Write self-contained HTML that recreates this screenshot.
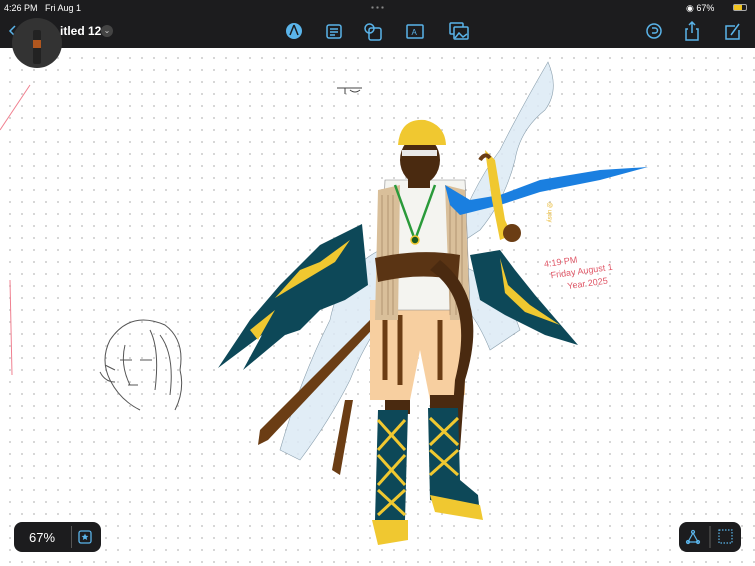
<!DOCTYPE html>
<html><head><meta charset="utf-8"><style>
*{margin:0;padding:0;box-sizing:border-box}
body{width:755px;height:566px;overflow:hidden;position:relative;font-family:"Liberation Sans",sans-serif;background:#fff}
#canvas{position:absolute;left:0;top:48px;width:755px;height:518px;background-color:#fff;background-image:radial-gradient(circle,#cfcfcf 0.8px,transparent 1.2px);background-size:12px 12px;background-position:4px 4px}
#top{position:absolute;left:0;top:0;width:755px;height:48px;background:#1c1c1e;color:#fff}
.st{position:absolute;top:3px;font-size:9px;color:#fff}
.title{position:absolute;left:60px;top:24px;font-size:12px;font-weight:bold;color:#fff}
.pill{position:absolute;background:#1c1c1e;border-radius:8px}
</style></head><body>
<div id="canvas"></div>
<div id="top">
 <div class="st" style="left:4px">4:26 PM&nbsp;&nbsp;&nbsp;Fri Aug 1</div>
 <div style="position:absolute;left:370px;top:6px;width:16px;height:3px;background:radial-gradient(circle,#888 1px,transparent 1.3px);background-size:5px 3px"></div>
 <div class="st" style="left:686px">◉ 67%</div>
 <div style="position:absolute;left:733px;top:4px;width:14px;height:7px;border:1px solid #aaa;border-radius:2px"><div style="width:8px;height:5px;background:#f0c420"></div></div>
 <div class="title">itled 12</div>
 <div style="position:absolute;left:101px;top:25px;width:12px;height:12px;border-radius:6px;background:#444;color:#ccc;font-size:8px;text-align:center;line-height:12px">⌄</div>
 <svg width="755" height="48" style="position:absolute;left:0;top:0" fill="none" stroke="#5ab4ea" stroke-width="1.5">
  <path d="M15 26 L10 31 L15 36" />
  <circle cx="294" cy="31" r="8" fill="#5ab4ea" stroke="none"/><path d="M294 25 L290 35 M294 25 L298 35" stroke="#1c1c1e"/>
  <rect x="327" y="25" width="14" height="13" rx="2"/><path d="M330 29h8M330 32h8M330 35h5"/>
  <rect x="365" y="24" width="9" height="9" rx="4.5"/><rect x="369" y="28" width="12" height="12" rx="2"/>
  <rect x="407" y="25" width="16" height="13" rx="1"/><text x="411.5" y="35" font-size="8" fill="#5ab4ea" stroke="none">A</text>
  <rect x="450" y="23" width="13" height="11" rx="1"/><rect x="454" y="27" width="14" height="12" rx="1" fill="#1c1c1e"/><path d="M455 38l4-5 4 4 4-3"/>
  <circle cx="654" cy="31" r="7"/><path d="M652 28h3a2 2 0 0 1 0 5h-3"/>
  <path d="M688 29h-2v11h12v-11h-2M692 22v11M689 25l3-3 3 3"/>
  <path d="M735 26h-9v13h13v-9M731 35l8-11"/>
 </svg>
</div>
<div style="position:absolute;left:12px;top:18px;width:50px;height:50px;border-radius:25px;background:#333"></div>
<div style="position:absolute;left:33px;top:30px;width:8px;height:34px;background:#222;border-radius:2px"><div style="margin-top:10px;height:8px;background:#b0561e"></div></div>

<svg width="755" height="566" style="position:absolute;left:0;top:0">
 <path d="M0 130 L30 85 M10 280 L12 375" stroke="#f08090" stroke-width="1" fill="none"/>
 <path d="M337 88 h25 M345 88 v6 M350 90 q5 4 10 0" stroke="#444" fill="none"/>
 <g stroke="#555" fill="none" stroke-width="1">
  <path d="M110 340 q20-30 55-15 q20 15 15 45 q5 20 -5 40 M110 340 q-10 20 0 40 q10 20 30 30 M125 345 q-5 20 5 40 M150 330 q10 20 5 60 M160 335 q15 20 10 60 M105 365 l10 5 M120 360 h12 M140 360 h12 M128 385 h10 M100 372 q5 10 15 10"/>
 </g>
 <g fill="#dceaf5" stroke="#7890a0" stroke-width="0.6" opacity="0.85">
  <path d="M548 62 Q560 90 545 110 Q520 130 515 160 Q505 200 480 230 L450 250 Q470 190 500 150 Q520 110 548 62Z"/>
  <path d="M380 250 Q340 270 330 320 Q300 380 280 450 L300 460 Q330 420 350 380 Q370 330 400 300Z"/>
  <path d="M440 260 Q500 270 520 330 L490 350 Q470 300 440 290Z"/>
 </g>
 <g fill="#0d4858">
  <path d="M362 224 L320 245 L280 285 L250 320 L218 368 L262 335 L243 370 L285 335 L300 330 L320 310 L345 300 L368 285Z"/>
  <path d="M470 255 L500 250 L515 270 L535 295 L578 345 L545 335 L525 325 L505 315 L480 300Z"/>
 </g>
 <g fill="#f0c830">
  <path d="M350 240 L320 262 L300 270 L275 298 L300 283 L335 262Z"/>
  <path d="M500 258 L508 285 L530 305 L560 325 L525 312 L505 293Z"/>
  <path d="M250 330 L275 310 L258 340Z"/>
 </g>
 <path d="M258 445 L268 440 L400 300 L395 295 L260 430Z" fill="#6b3d14"/>
 <path d="M332 470 L345 400 L353 400 L340 475Z" fill="#6b3d14"/>
 <path d="M370 300 L465 300 L465 395 L430 400 L420 350 L410 400 L370 400Z" fill="#f7cfa0"/>
 <path d="M385 320 v60 M400 315 v70 M440 320 v60" stroke="#6b3d14" stroke-width="5"/>
 <path d="M385 180 L465 180 L470 310 L380 310Z" fill="#f4f4f0" stroke="#888" stroke-width="0.6"/>
 <path d="M378 190 L400 185 L398 320 L375 320Z M445 185 L465 190 L470 320 L450 320Z" fill="#d9bf9a"/>
 <path d="M382 195v120M388 195v120M393 195v120M450 195v120M456 195v120M462 195v120" stroke="#8a6a4a" stroke-width="0.5"/>
 <path d="M395 185 L415 240 L435 185" stroke="#2a9a3a" stroke-width="2.5" fill="none"/>
 <circle cx="415" cy="240" r="4" fill="#1a5a20" stroke="#f0c830" stroke-width="1.5"/>
 <path d="M375 258 Q420 248 460 255 L458 280 Q420 272 378 282Z" fill="#5a3414"/>
 <path d="M440 260 Q490 300 465 380 L460 450 L450 450 L455 380 Q475 300 430 270Z" fill="#4a2a10"/>
 <ellipse cx="420" cy="160" rx="20" ry="24" fill="#4a2a10"/>
 <path d="M398 145 Q400 118 425 120 Q445 125 446 145 Z" fill="#f0c830"/>
 <rect x="402" y="150" width="35" height="6" fill="#e8e8e8"/>
 <rect x="408" y="178" width="22" height="10" fill="#4a2a10"/>
 <path d="M445 185 L470 200 L500 195 L540 180 L600 170 L648 167 L600 180 L540 192 L500 205 L460 215 L450 205Z" fill="#1a7fe0"/>
 <path d="M485 150 L495 160 L505 220 L512 235 L500 240 L492 200Z" fill="#f0c830"/>
 <circle cx="512" cy="233" r="9" fill="#6b3d14"/>
 <path d="M480 160 q5-8 10-2" stroke="#6b3d14" stroke-width="4" fill="none"/>
 <rect x="385" y="400" width="25" height="14" fill="#4a2a10"/>
 <rect x="430" y="395" width="25" height="14" fill="#4a2a10"/>
 <path d="M378 410 L408 410 L405 520 L375 520Z" fill="#0d4858"/>
 <path d="M428 408 L458 408 L460 480 L478 495 L480 515 L430 500Z" fill="#0d4858"/>
 <g stroke="#f0c830" stroke-width="3" fill="none">
  <path d="M378 420 L405 450 M405 420 L378 450 M378 455 L405 485 M405 455 L378 485 M378 490 L405 515 M405 490 L378 515"/>
  <path d="M430 418 L458 445 M458 418 L430 445 M430 450 L458 475 M458 450 L430 475"/>
 </g>
 <path d="M372 520 L408 520 L408 540 L378 545Z" fill="#f0c830"/>
 <path d="M430 495 L480 505 L483 520 L435 512Z" fill="#f0c830"/>
 <g font-family="Liberation Sans,sans-serif" font-size="9" fill="#e05868" transform="rotate(-8 560 270)">
  <text x="545" y="265">4:19 PM</text><text x="550" y="277">Friday August 1</text><text x="565" y="290">Year 2025</text>
 </g>
 <text x="540" y="210" font-size="6" fill="#e8b830" transform="rotate(90 548 210)">@ upsy</text>
</svg>

<div class="pill" style="left:14px;top:522px;width:87px;height:30px"><span style="position:absolute;left:15px;top:8px;color:#fff;font-size:13px">67%</span><div style="position:absolute;left:57px;top:4px;width:1px;height:22px;background:#555"></div>
<svg width="14" height="14" style="position:absolute;left:64px;top:8px" fill="none" stroke="#5ab4ea" stroke-width="1.3"><rect x="1" y="1" width="12" height="12" rx="2"/><path d="M7 3.5l1 2.3 2.4.2-1.8 1.6.6 2.4L7 8.7 4.8 10l.6-2.4L3.6 6l2.4-.2z" fill="#5ab4ea" stroke="none"/></svg></div>
<div class="pill" style="left:679px;top:522px;width:62px;height:30px">
 <svg width="62" height="30" fill="none" stroke="#5ab4ea" stroke-width="1.2"><path d="M9 20l5-9 5 9z"/><circle cx="14" cy="10" r="1.5"/><circle cx="9" cy="20" r="1.5"/><circle cx="19" cy="20" r="1.5"/><line x1="31" y1="4" x2="31" y2="26" stroke="#555"/><rect x="40" y="8" width="13" height="13" stroke-dasharray="1.5 1.5"/></svg>
</div>
</body></html>
